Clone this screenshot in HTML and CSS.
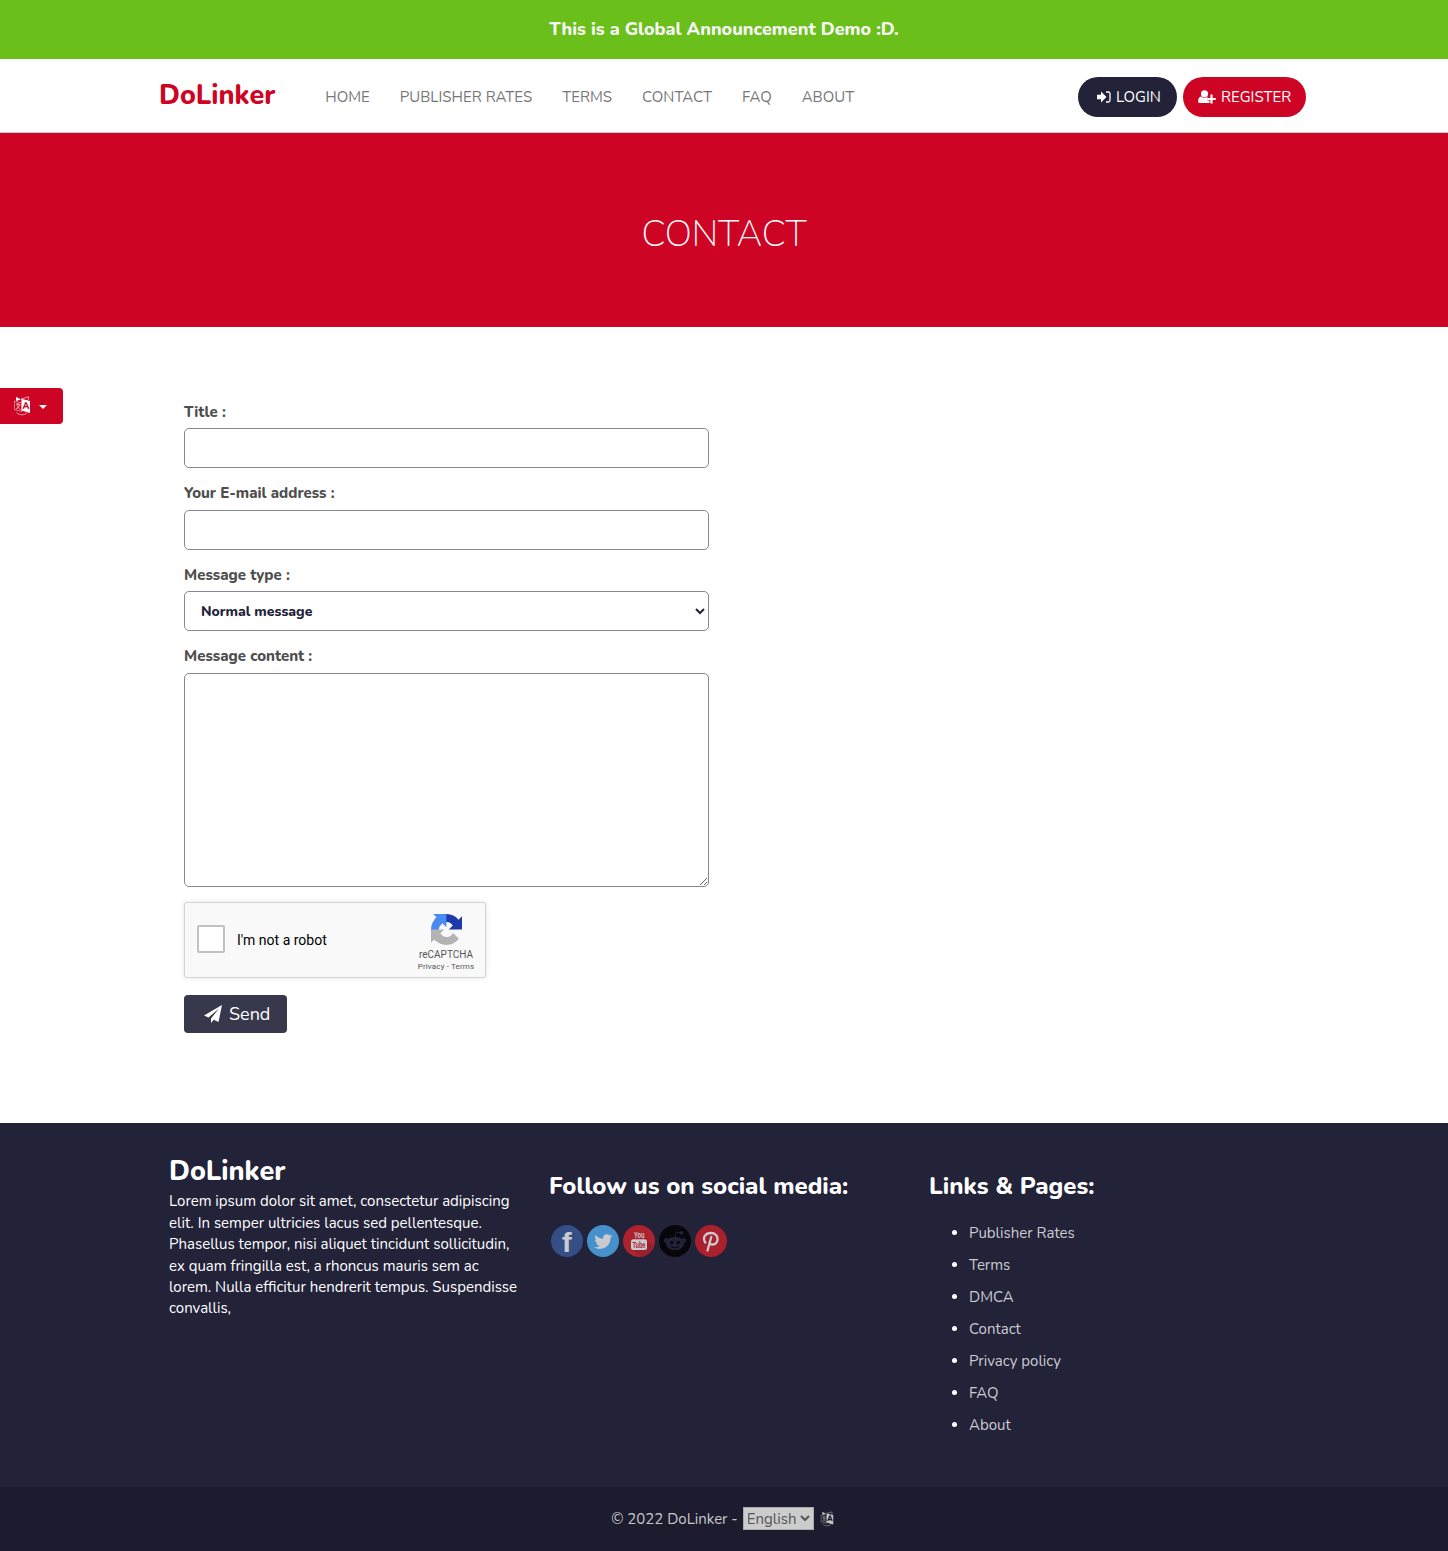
FILE: index.html
```html
<!DOCTYPE html>
<html lang="en">
<head>
    <meta charset="UTF-8">
    <meta name="viewport" content="width=device-width, initial-scale=1.0">
    <title>Contact - DoLinker</title>
    <link rel="stylesheet" href="styles.css">
</head>
<body>
    <!-- shared icons -->
    <svg class="sprite">
      <symbol id="translate" viewBox="0 0 18 20">
        <path d="M1.500 5.200L9 7v8.500L1.500 13.700z" fill="none" stroke="currentColor" stroke-width=".6" opacity=".8"/>
        <path d="M8.500 2.800L17 5v12L8.500 14.500z" fill="currentColor"/>
        <path d="M3 .8l5 2.800-5 1.400z" fill="currentColor"/>
        <path d="M8 3l7.500-2.200v3M3.500 16.500c2.500 3 8 3 10.500.3" fill="none" stroke="currentColor" stroke-width=".6"/>
        <path d="M3 8l4.500 1M5 7v2M3 13c2-1 3-2 3.500-4M4 9.500c.8 2 2 3 3.500 4" fill="none" stroke="currentColor" stroke-width=".7"/>
      </symbol>
    </svg>

    <div class="announcement">This is a Global Announcement Demo :D.</div>

    <header class="navbar">
      <div class="navbar-inner">
        <a class="brand" href="#">DoLinker</a>
        <nav class="menu">
          <a href="#">HOME</a>
          <a href="#">PUBLISHER RATES</a>
          <a href="#">TERMS</a>
          <a href="#">CONTACT</a>
          <a href="#">FAQ</a>
          <a href="#">ABOUT</a>
        </nav>
        <div class="account">
          <a class="pill login" href="#">
            <svg width="14" height="12" viewBox="0 0 14 12"><path d="M0 3.800h4V.5L9.500 6 4 11.500V8.200H0z" fill="currentColor"/><path d="M9 1h2.300Q13 1 13 2.700v6.600Q13 11 11.300 11H9" fill="none" stroke="currentColor" stroke-width="1.300"/></svg>
            <span>LOGIN</span>
          </a>
          <a class="pill register" href="#">
            <svg width="18" height="14" viewBox="0 0 18 14"><circle cx="6.500" cy="3.800" r="3.600" fill="currentColor"/><path d="M3 6.500Q6.500 9.500 9.500 6.700V10.500h2V13H1.500Q.2 13 .2 11.500.2 7.200 3 6.500z" fill="currentColor"/><path d="M13.500 4.500v9M9.200 9h8.600" stroke="currentColor" stroke-width="2.200"/></svg>
            <span>REGISTER</span>
          </a>
        </div>
      </div>
    </header>

    <section class="hero">
      <h1>CONTACT</h1>
    </section>

    <button class="lang-toggle" type="button">
      <span class="translate"><svg width="18" height="20"><use href="#translate"/></svg><b>A</b></span>
      <i class="caret"></i>
    </button>

    <main class="content">
      <form class="contact-form">
        <label for="title">Title :</label>
        <input type="text" id="title">
        <label for="email">Your E-mail address :</label>
        <input type="text" id="email">
        <label for="type">Message type :</label>
        <select id="type">
          <option>Normal message</option>
        </select>
        <label for="message">Message content :</label>
        <textarea id="message"></textarea>

        <div class="captcha">
          <span class="checkbox"></span>
          <span class="captcha-text">I'm not a robot</span>
          <div class="captcha-brand">
            <svg width="31" height="31" viewBox="0 0 64 64">
              <path fill="#1c3aa9" d="M64 31.955l-.033-1.370V4.687l-7.160 7.160C50.948 4.674 42.033.093 32.050.093c-10.400 0-19.622 4.960-25.458 12.640l11.736 11.860a15.550 15.550 0 0 1 4.754-5.334c2.050-1.600 4.952-2.906 8.968-2.906.485 0 .860.057 1.135.163 4.976.393 9.288 3.140 11.828 7.124l-8.307 8.307L64 31.953"/>
              <path fill="#4a8af4" d="M31.862.094l-1.370.033H4.594l7.160 7.160C4.580 13.147 0 22.060 0 32.046c0 10.400 4.960 19.622 12.640 25.458L24.500 45.768a15.550 15.550 0 0 1-5.334-4.754c-1.600-2.050-2.906-4.952-2.906-8.968 0-.485.057-.860.163-1.135.393-4.976 3.140-9.288 7.124-11.828l8.307 8.307L31.860.095"/>
              <path fill="#b3b3b3" d="M.001 32.045l.033 1.370v25.898l7.160-7.160c5.860 7.173 14.774 11.754 24.760 11.754 10.400 0 19.622-4.960 25.458-12.640l-11.736-11.860a15.550 15.550 0 0 1-4.754 5.334c-2.050 1.600-4.952 2.906-8.968 2.906-.485 0-.860-.057-1.135-.163-4.976-.393-9.288-3.140-11.828-7.124l8.307-8.307-16.020.090"/>
            </svg>
            <span class="captcha-name">reCAPTCHA</span>
            <span class="captcha-links">Privacy - Terms</span>
          </div>
        </div>

        <button class="send" type="button">
          <svg width="18" height="18" viewBox="0 0 18 18"><path d="M18 0L0 10.500l4.500 2L15 3.500 7 13.500V18l2.700-3.200L14.500 17z" fill="currentColor"/></svg>
          <span>Send</span>
        </button>
      </form>
    </main>

    <footer>
      <div class="footer-cols">
        <div class="about">
          <h2>DoLinker</h2>
          <p>Lorem ipsum dolor sit amet, consectetur adipiscing<br>
          elit. In semper ultricies lacus sed pellentesque.<br>
          Phasellus tempor, nisi aliquet tincidunt sollicitudin,<br>
          ex quam fringilla est, a rhoncus mauris sem ac<br>
          lorem. Nulla efficitur hendrerit tempus. Suspendisse<br>
          convallis,</p>
        </div>
        <div class="social">
          <h3>Follow us on social media:</h3>
          <div class="social-icons">
            <svg viewBox="0 0 32 32"><circle cx="16" cy="16" r="16" fill="#344e86"/><text x="10.800" y="26.800" textLength="10" lengthAdjust="spacingAndGlyphs" class="fb">f</text></svg>
            <svg viewBox="0 0 32 32"><circle cx="16" cy="16" r="16" fill="#4691cb"/><path transform="translate(7.200 7.500) scale(.0355)" fill="#cacad0" d="M459.370 151.716c.325 4.548.325 9.097.325 13.645 0 138.720-105.583 298.558-298.558 298.558-59.452 0-114.680-17.219-161.137-47.106 8.447.974 16.568 1.299 25.340 1.299 49.055 0 94.213-16.568 130.274-44.832-46.132-.975-84.792-31.188-98.112-72.772 6.498.974 12.995 1.624 19.818 1.624 9.421 0 18.843-1.300 27.614-3.573-48.081-9.747-84.143-51.980-84.143-102.985v-1.299c13.969 7.797 30.214 12.670 47.431 13.319-28.264-18.843-46.781-51.005-46.781-87.391 0-19.492 5.197-37.360 14.294-52.954 51.655 63.675 129.300 105.258 216.365 109.807-1.624-7.797-2.599-15.918-2.599-24.040 0-57.828 46.782-104.934 104.934-104.934 30.213 0 57.502 12.670 76.670 33.137 23.715-4.548 46.456-13.320 66.599-25.340-7.798 24.366-24.366 44.833-46.132 57.827 21.117-2.273 41.584-8.122 60.426-16.243-14.292 20.791-32.161 39.308-52.628 54.253z"/></svg>
            <svg viewBox="0 0 32 32"><circle cx="16" cy="16" r="16" fill="#ac222d"/><path d="M24 16l7 5a16 16 0 0 1-12 10.700L9 24z" fill="#98202c"/><rect x="8" y="14.300" width="16" height="10.700" rx="2.500" fill="#cacad0"/><text x="11" y="13" textLength="10.500" lengthAdjust="spacingAndGlyphs" class="yt">You</text><text x="9.500" y="23" textLength="13" lengthAdjust="spacingAndGlyphs" class="yt tube">Tube</text></svg>
            <svg viewBox="0 0 32 32"><circle cx="16" cy="16" r="16" fill="#07070b"/><g fill="#22223a"><ellipse cx="16" cy="18.500" rx="9" ry="6.700"/><circle cx="7.500" cy="15.500" r="2.500"/><circle cx="24.500" cy="15.500" r="2.500"/><circle cx="22.500" cy="7.800" r="1.900"/></g><path d="M16 12l1.200-5 4.500 1" fill="none" stroke="#22223a"/><circle cx="12.700" cy="17.500" r="1.700" fill="#07070b"/><circle cx="19.300" cy="17.500" r="1.700" fill="#07070b"/><path d="M12 21.500q4 3 8 0" fill="none" stroke="#07070b"/></svg>
            <svg viewBox="0 0 32 32"><circle cx="16" cy="16" r="16" fill="#aa202c"/><path d="M10.300 17.500C7 12.500 10.500 8 16 8c8.500 0 8.500 11.500 1.500 11.500-2 0-3-1-3-2M16.300 12L12.500 25.500" fill="none" stroke="#cacad0" stroke-width="2.300" stroke-linecap="round"/></svg>
          </div>
        </div>
        <div class="links">
          <h3>Links &amp; Pages:</h3>
          <ul>
            <li><a href="#">Publisher Rates</a></li>
            <li><a href="#">Terms</a></li>
            <li><a href="#">DMCA</a></li>
            <li><a href="#">Contact</a></li>
            <li><a href="#">Privacy policy</a></li>
            <li><a href="#">FAQ</a></li>
            <li><a href="#">About</a></li>
          </ul>
        </div>
      </div>
      <div class="copyright">
        <span>© 2022 DoLinker -</span>
        <select>
          <option>English</option>
        </select>
        <span class="translate small"><svg width="14" height="16"><use href="#translate"/></svg><b>A</b></span>
      </div>
    </footer>
</body>
</html>
```
FILE: styles.css
```css
* {
  box-sizing: border-box;
}
body {
  margin: 0;
  font-family: Nunito, Lato, "Liberation Sans", sans-serif;
  font-size: 15px;
  line-height: 1.42857;
  color: #4e4e4e;
  background: #fff;
}
a {
  color: inherit;
  text-decoration: none;
}
h1, h2, h3, p, ul {
  margin: 0;
}
.sprite {
  display: none;
}
.announcement {
  height: 59px;
  line-height: 58px;
  text-align: center;
  font-size: 18px;
  font-weight: 800;
  color: #f5f5f5;
  background: #6bbf1b;
}
.navbar {
  height: 74px;
  border-bottom: 1px solid #ccc;
}
.navbar-inner {
  display: flex;
  align-items: center;
  width: 1146px;
  height: 75px;
  margin-left: 160px;
}
.brand {
  width: 165px;
  margin: 0 0 1px -1px;
  font-size: 27px;
  font-weight: 800;
  color: #cd0424;
}
.menu {
  display: flex;
  gap: 30px;
  padding: 2px 0 0 1.3px;
  color: #777;
}
.account {
  display: flex;
  gap: 6px;
  margin-left: auto;
}
.pill {
  display: flex;
  align-items: center;
  gap: 5px;
  height: 40px;
  border-radius: 20px;
  color: #fff;
}
.pill span {
  padding-top: 2px;
}
.login {
  width: 99px;
  padding-left: 19px;
  background: #222239;
}
.register {
  width: 123px;
  padding-left: 15px;
  background: #cd0424;
}
.hero {
  display: flex;
  align-items: center;
  justify-content: center;
  height: 194px;
  padding-top: 10px;
  color: #fff;
  background: #cd0424;
}
.hero h1 {
  font-size: 36px;
  font-weight: 200;
}
.lang-toggle {
  position: absolute;
  top: 388px;
  left: 0;
  display: flex;
  align-items: center;
  gap: 8px;
  width: 63px;
  height: 36px;
  padding: 0 0 0 13px;
  border: 0;
  border-radius: 0 4px 4px 0;
  color: #fff;
  background: #cd0424;
}
.translate {
  position: relative;
  display: inline-flex;
}
.translate b {
  position: absolute;
  top: 5px;
  left: 9.5px;
  font: 900 9px/10px Nunito, sans-serif;
  color: #cd0424;
}
.translate.small b {
  top: 4px;
  left: 7.5px;
  font-size: 7px;
  line-height: 8px;
  color: #1c1c2e;
}
.caret {
  margin-top: 2px;
  border: 4px solid transparent;
  border-top-color: #fff;
  border-bottom: 0;
}
.content {
  height: 796px;
  padding: 74px 0 0 184px;
}
.contact-form {
  width: 525px;
}
.contact-form label {
  display: block;
  height: 27.4px;
  font-weight: 800;
  line-height: 22px;
}
.contact-form input,
.contact-form select,
.contact-form textarea {
  display: block;
  width: 100%;
  height: 40px;
  margin: 0 0 14.05px;
  border: 1px solid #86869a;
  border-radius: 5px;
  background: #fff;
}
.contact-form select {
  padding: 0 12px;
  font: 800 14px Nunito, Lato, sans-serif;
  color: #222239;
}
.contact-form textarea {
  height: 214px;
  margin-bottom: 15.2px;
}
.captcha {
  display: flex;
  align-items: center;
  width: 302px;
  height: 76px;
  padding: 0 11px 0 12px;
  border: 1px solid #d3d3d3;
  border-radius: 3px;
  box-shadow: 0 0 4px 1px rgba(0, 0, 0, 0.08);
  font-family: Roboto, sans-serif;
  color: #000;
  background: #f9f9f9;
}
.checkbox {
  width: 28px;
  height: 28px;
  margin: -2px 12px 0 0;
  border: 2px solid #c1c1c1;
  border-radius: 2px;
  background: #fff;
}
.captcha-text {
  padding-top: 2px;
  font-size: 14px;
}
.captcha-brand {
  display: flex;
  flex-direction: column;
  align-items: center;
  width: 56px;
  margin-left: auto;
  padding-top: 8px;
  white-space: nowrap;
  color: #555;
}
.captcha-name {
  margin-top: 4px;
  font-size: 10px;
  line-height: 12px;
}
.captcha-links {
  font-size: 8px;
  line-height: 12px;
  letter-spacing: 0.15px;
}
.send {
  display: flex;
  align-items: center;
  gap: 7px;
  width: 103px;
  height: 38px;
  margin-top: 17px;
  padding: 0 0 0 20px;
  border: 0;
  border-radius: 4px;
  font: 18px Nunito, Lato, sans-serif;
  color: #fff;
  background: #38384d;
}
footer {
  color: #fff;
  background: #222239;
}
.footer-cols {
  display: grid;
  grid-template-columns: repeat(3, 380px);
  height: 364px;
  padding: 28px 0 0 169px;
}
.about h2 {
  height: 40px;
  font-size: 27px;
  font-weight: 800;
  line-height: 41px;
}
.about p {
  padding-top: 0.3px;
}
.footer-cols h3 {
  margin-top: 18px;
  font-size: 24px;
  font-weight: 800;
  line-height: 34px;
}
.social-icons {
  display: flex;
  gap: 4px;
  margin: 22px 0 0 2px;
}
.social-icons svg {
  width: 32px;
  height: 32px;
}
.fb {
  font: bold 28px "Liberation Sans", sans-serif;
  fill: #cacad0;
}
.yt {
  font: bold 9px "Liberation Sans", sans-serif;
  fill: #cacad0;
}
.tube {
  fill: #ac222d;
}
.links ul {
  margin-top: 14px;
  padding-left: 40px;
}
.links li {
  line-height: 32px;
}
.links a {
  color: #cbcbd0;
}
.copyright {
  display: flex;
  align-items: center;
  justify-content: center;
  height: 64px;
  padding-right: 3px;
  color: #c6c6ca;
  background: #1c1c2e;
}
.copyright > span:first-child {
  padding-top: 1px;
}
.copyright select {
  width: 71px;
  height: 23px;
  margin: 0 6px 1px 5px;
  padding: 0;
  border: 1px solid #aaa;
  border-radius: 0;
  font: 15px Nunito, Lato, sans-serif;
  text-indent: -1px;
  color: #555;
  background: #ccc;
}
```
